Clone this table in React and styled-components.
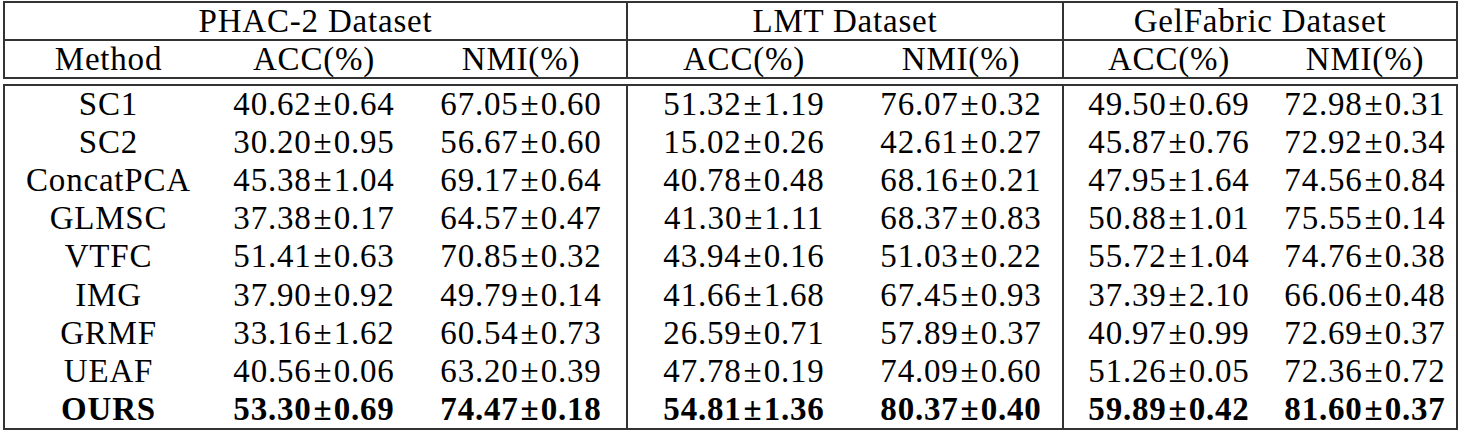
import styled, { createGlobalStyle } from 'styled-components';

const GlobalStyle = createGlobalStyle`
  html, body {
    margin: 0;
    padding: 0;
    background: #fff;
  }
`;

const Page = styled.div`
  padding: 1px 0 0 3px;
  font-family: "Liberation Serif", "Times New Roman", serif;
  font-size: 33px;
  letter-spacing: 0.8px;
  color: #000;
`;

const Grid = styled.table`
  width: 1453px;
  table-layout: fixed;
  border-collapse: collapse;
  border: 2px solid #333;
  margin-bottom: ${(p) => (p.$gap ? '5px' : '0')};
`;

const Row = styled.tr`
  height: ${(p) => p.$h || 38}px;
  border-top: ${(p) => (p.$ruled ? '2px solid #333' : 'none')};
`;

const Cell = styled.td`
  padding: 0;
  text-align: center;
  vertical-align: middle;
  line-height: 1;
  white-space: nowrap;
  font-weight: ${(p) => (p.$bold ? 700 : 400)};
  border-right: ${(p) => (p.$divider ? '2px solid #333' : 'none')};
`;

const PlusMinus = styled.span`
  letter-spacing: 0;
  margin: 0 2px;
`;

const widths = [208, 204, 211, 233, 203, 211, 183];

const Cols = () => (
  <colgroup>
    {widths.map((w, i) => (
      <col key={i} style={{ width: w }} />
    ))}
  </colgroup>
);

const rows = [
  ['SC1', '40.62±0.64', '67.05±0.60', '51.32±1.19', '76.07±0.32', '49.50±0.69', '72.98±0.31'],
  ['SC2', '30.20±0.95', '56.67±0.60', '15.02±0.26', '42.61±0.27', '45.87±0.76', '72.92±0.34'],
  ['ConcatPCA', '45.38±1.04', '69.17±0.64', '40.78±0.48', '68.16±0.21', '47.95±1.64', '74.56±0.84'],
  ['GLMSC', '37.38±0.17', '64.57±0.47', '41.30±1.11', '68.37±0.83', '50.88±1.01', '75.55±0.14'],
  ['VTFC', '51.41±0.63', '70.85±0.32', '43.94±0.16', '51.03±0.22', '55.72±1.04', '74.76±0.38'],
  ['IMG', '37.90±0.92', '49.79±0.14', '41.66±1.68', '67.45±0.93', '37.39±2.10', '66.06±0.48'],
  ['GRMF', '33.16±1.62', '60.54±0.73', '26.59±0.71', '57.89±0.37', '40.97±0.99', '72.69±0.37'],
  ['UEAF', '40.56±0.06', '63.20±0.39', '47.78±0.19', '74.09±0.60', '51.26±0.05', '72.36±0.72'],
  ['OURS', '53.30±0.69', '74.47±0.18', '54.81±1.36', '80.37±0.40', '59.89±0.42', '81.60±0.37'],
];

const dividerAt = (i) => i === 2 || i === 4;

// split "a±b" so the sign gets math-like spacing
const Value = ({ text }) => {
  const parts = text.split('±');
  if (parts.length < 2) return text;
  return (
    <>
      {parts[0]}
      <PlusMinus>±</PlusMinus>
      {parts[1]}
    </>
  );
};

export default function App() {
  return (
    <Page>
      <GlobalStyle />
      <Grid $gap>
        <Cols />
        <tbody>
          <Row>
            <Cell colSpan={3} $divider>PHAC-2 Dataset</Cell>
            <Cell colSpan={2} $divider>LMT Dataset</Cell>
            <Cell colSpan={2}>GelFabric Dataset</Cell>
          </Row>
          <Row $ruled>
            {['Method', 'ACC(%)', 'NMI(%)', 'ACC(%)', 'NMI(%)', 'ACC(%)', 'NMI(%)'].map((t, i) => (
              <Cell key={i} $divider={dividerAt(i)}>{t}</Cell>
            ))}
          </Row>
        </tbody>
      </Grid>
      <Grid>
        <Cols />
        <tbody>
          {rows.map((r, ri) => (
            <Row key={ri} $h={38.2}>
              {r.map((t, i) => (
                <Cell key={i} $divider={dividerAt(i)} $bold={ri === rows.length - 1}>
                  <Value text={t} />
                </Cell>
              ))}
            </Row>
          ))}
        </tbody>
      </Grid>
    </Page>
  );
}
